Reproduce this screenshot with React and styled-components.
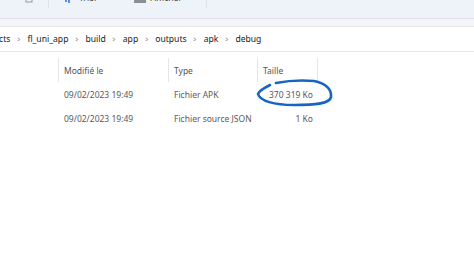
import React from "react";
import styled, { createGlobalStyle } from "styled-components";

const Global = createGlobalStyle`
  html, body { margin: 0; padding: 0; background: #fff; }
  body { font-family: "Noto Sans", "Open Sans", sans-serif; overflow: hidden; }
`;

const Page = styled.div`
  width: 474px;
  height: 266px;
  display: flex;
  flex-direction: column;
  background: #fff;
  position: relative;
`;

const Toolbar = styled.div`
  height: 18px;
  flex: none;
  background: #eef3f9;
  border-bottom: 1px solid #dce3eb;
  display: flex;
  align-items: flex-start;
  padding-left: 25px;
  overflow: hidden;
`;

const ToolGroup = styled.div`
  display: flex;
  align-items: flex-end;
  height: 3px;
  gap: ${(p) => p.gap || 6}px;
  margin-left: ${(p) => p.offset || 0}px;
  font-size: 8.6px;
  color: #444;
  line-height: 1;
`;

const Sep = styled.div`
  width: 1px;
  height: 8px;
  background: #dfe4ea;
  margin-left: ${(p) => p.offset}px;
  align-self: flex-start;
`;

const Strip = styled.div`
  height: 7px;
  flex: none;
  background: #f4f5f6;
`;

const Address = styled.div`
  height: 24px;
  flex: none;
  border-top: 1px solid #e8e8e8;
  border-bottom: 1px solid #e6e6e6;
  display: flex;
  align-items: center;
  margin-left: -1px;
  font-size: 8.6px;
  color: #222;
  gap: 6.5px;
`;

const Chevron = styled.span`
  color: #777;
  font-size: 7px;
  transform: scaleX(0.7);
`;

const List = styled.div`
  padding-top: 6px;
  padding-left: 58px;
  display: flex;
  flex-direction: column;
`;

const Row = styled.div`
  display: grid;
  grid-template-columns: 110px 89px 61px;
  height: 24px;
  align-items: center;
  font-size: 8.5px;
  color: ${(p) => (p.head ? "#555" : "#5a5a5a")};
`;

const Cell = styled.div`
  padding: 0 5px;
  height: 100%;
  display: flex;
  align-items: center;
  justify-content: ${(p) => (p.right ? "flex-end" : "flex-start")};
  border-left: ${(p) => (p.line ? "1px solid #e6e6e6" : "1px solid transparent")};
  border-right: ${(p) => (p.lineR ? "1px solid #e6e6e6" : "none")};
  white-space: nowrap;
`;

const Mark = styled.svg`
  position: absolute;
  left: 254px;
  top: 78px;
`;

const SquareIcon = () => (
  <svg width="8" height="5" viewBox="0 0 8 5">
    <rect x="1" y="-4" width="6" height="8" fill="none" stroke="#999" />
  </svg>
);

const SortIcon = () => (
  <svg width="6" height="4" viewBox="0 0 6 4">
    <path d="M1 0v3M4 0v4" stroke="#1f6fd0" strokeWidth="1.5" />
  </svg>
);

const ViewIcon = () => (
  <svg width="12" height="3" viewBox="0 0 12 3">
    <rect x="0" y="0" width="12" height="3" fill="#8a8f96" />
  </svg>
);

export default function App() {
  const crumbs = ["cts", "fl_uni_app", "build", "app", "outputs", "apk", "debug"];
  return (
    <>
      <Global />
      <Page>
        <Toolbar>
          <ToolGroup>
            <SquareIcon />
          </ToolGroup>
          <Sep offset={15} />
          <ToolGroup offset={16} gap={8}>
            <SortIcon />
            <span>Trier</span>
          </ToolGroup>
          <ToolGroup offset={36} gap={5}>
            <ViewIcon />
            <span>Afficher</span>
          </ToolGroup>
          <Sep offset={24} />
        </Toolbar>
        <Strip />
        <Address>
          {crumbs.map((c, i) => (
            <React.Fragment key={c}>
              {i > 0 && <Chevron>&gt;</Chevron>}
              <span>{c}</span>
            </React.Fragment>
          ))}
        </Address>
        <List>
          <Row head>
            <Cell line>Modifié le</Cell>
            <Cell line>Type</Cell>
            <Cell line lineR>Taille</Cell>
          </Row>
          <Row>
            <Cell>09/02/2023 19:49</Cell>
            <Cell>Fichier APK</Cell>
            <Cell right>370 319 Ko</Cell>
          </Row>
          <Row>
            <Cell>09/02/2023 19:49</Cell>
            <Cell>Fichier source JSON</Cell>
            <Cell right>1 Ko</Cell>
          </Row>
        </List>
        <Mark width="82" height="32" viewBox="0 0 82 32">
          <path
            d="M16 7 C 10 10, 5 13, 4 16 C 6 23, 20 27, 40 27 C 60 27, 76 26, 77 19 C 78 12, 72 5, 60 3 C 48 2, 32 3, 22 5"
            fill="none"
            stroke="#1566c2"
            strokeWidth="2.6"
            strokeLinecap="round"
          />
        </Mark>
      </Page>
    </>
  );
}
